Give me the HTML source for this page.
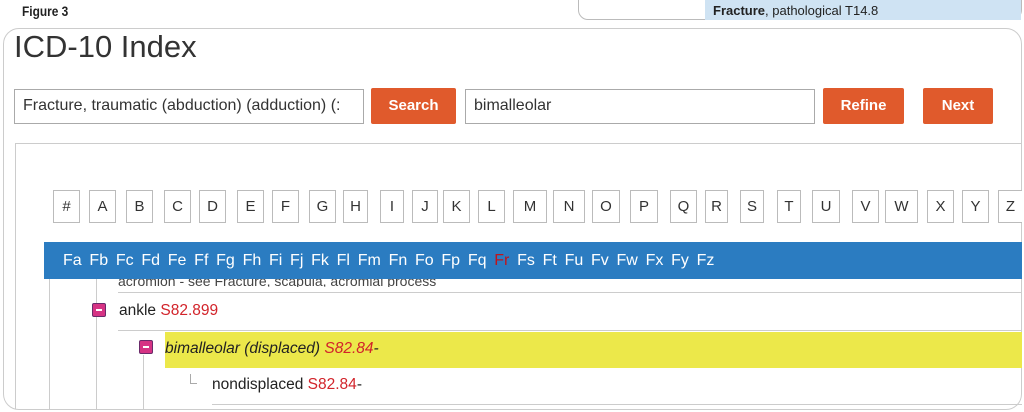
<!DOCTYPE html>
<html><head><meta charset="utf-8"><style>
*{margin:0;padding:0;box-sizing:border-box}
html,body{width:1024px;height:412px;overflow:hidden}
body{background:#fff;position:relative;font-family:"Liberation Sans",sans-serif;color:#222}
.a{position:absolute}
.fig{left:22px;top:3px;font:bold 14px "Liberation Sans Narrow","Liberation Sans",sans-serif;transform:scaleX(.85);transform-origin:left}
.topbox{left:578px;top:-20px;width:444px;height:40px;border:1px solid #bbb;border-radius:10px;overflow:hidden}
.topcell{left:705px;top:0;width:316px;height:20px;background:#cfe3f3;font-size:13px;padding:3px 8px;color:#222}
.panel{left:3px;top:28px;width:1019px;height:382px;border:1.5px solid #ccc;border-radius:16px}
.title{left:14px;top:29px;font-size:31px;color:#333}
.inp{height:35px;border:1px solid #aaa;background:#fff;font-size:16px;padding:7px 8px;white-space:nowrap;overflow:hidden;color:#333}
.btn{height:36px;background:#e05a2c;color:#fff;font-size:15px;font-weight:bold;text-align:center;line-height:36px;border-radius:2px}
.inner{left:15px;top:143px;width:1007px;height:266px;border:1px solid #ccc;border-bottom:none;border-right:none}
.lb{top:190px;width:27px;height:33px;border:1px solid #bbb;text-align:center;line-height:31px;font-size:15px;color:#333;background:#fff}
.bar{left:44px;top:242px;width:978px;height:37px;background:#2b7cc1;color:#fff;font-size:16px;line-height:37px;padding-left:19px;word-spacing:3.3px;white-space:nowrap}
.vl{width:1px;background:#ccc}
.hl{height:1px;background:#ccc}
.ico{width:14px;height:14px;background:#d63384;border:1px solid #6a2a6a;border-radius:2px}
.ico::after{content:"";position:absolute;left:3px;top:5px;width:6px;height:2px;background:#fff}
.red{color:#d2232a}
</style></head><body>
<div class="a fig">Figure 3</div>
<div class="a topbox"></div>
<div class="a topcell"><b>Fracture</b>, pathological T14.8</div>
<div class="a panel"></div>
<div class="a title">ICD-10 Index</div>
<div class="a inp" style="left:14px;top:89px;width:350px">Fracture, traumatic (abduction) (adduction) (:</div>
<div class="a btn" style="left:371px;top:88px;width:85px">Search</div>
<div class="a inp" style="left:465px;top:89px;width:350px">bimalleolar</div>
<div class="a btn" style="left:823px;top:88px;width:81px">Refine</div>
<div class="a btn" style="left:923px;top:88px;width:70px">Next</div>
<div class="a inner"></div>
<div class="a lb" style="left:53px">#</div><div class="a lb" style="left:89px">A</div><div class="a lb" style="left:126px">B</div><div class="a lb" style="left:164px">C</div><div class="a lb" style="left:199px">D</div><div class="a lb" style="left:237px">E</div><div class="a lb" style="left:272px">F</div><div class="a lb" style="left:309px">G</div><div class="a lb" style="left:343px;width:25px">H</div><div class="a lb" style="left:380px;width:24px">I</div><div class="a lb" style="left:412px;width:26px">J</div><div class="a lb" style="left:443px">K</div><div class="a lb" style="left:478px">L</div><div class="a lb" style="left:513px;width:34px">M</div><div class="a lb" style="left:553px;width:32px">N</div><div class="a lb" style="left:592px;width:28px">O</div><div class="a lb" style="left:630px;width:28px">P</div><div class="a lb" style="left:670px">Q</div><div class="a lb" style="left:705px;width:23px">R</div><div class="a lb" style="left:740px;width:24px">S</div><div class="a lb" style="left:777px;width:24px">T</div><div class="a lb" style="left:812px;width:28px">U</div><div class="a lb" style="left:852px">V</div><div class="a lb" style="left:885px;width:33px">W</div><div class="a lb" style="left:927px">X</div><div class="a lb" style="left:962px">Y</div><div class="a lb" style="left:998px;width:24px;border-right:none">Z</div>
<div class="a bar">Fa Fb Fc Fd Fe Ff Fg Fh Fi Fj Fk Fl Fm Fn Fo Fp Fq <span style="color:#c0141b">Fr</span> Fs Ft Fu Fv Fw Fx Fy Fz</div>
<div class="a vl" style="left:49px;top:279px;height:131px"></div>
<div class="a vl" style="left:96px;top:279px;height:131px"></div>
<div class="a vl" style="left:143px;top:355px;height:55px"></div>
<div class="a" style="left:118px;top:279px;height:8px;overflow:hidden;font-size:14px;line-height:4px;color:#444">acromion - see Fracture, scapula, acromial process</div>
<div class="a hl" style="left:118px;top:292px;width:904px"></div>
<div class="a ico" style="left:92px;top:303px"></div>
<div class="a" style="left:119px;top:302px;font-size:15.5px">ankle <span class="red">S82.899</span></div>
<div class="a hl" style="left:118px;top:330px;width:904px"></div>
<div class="a" style="left:165px;top:332px;width:857px;height:36px;background:#ece84a"></div>
<div class="a ico" style="left:139px;top:340px"></div>
<div class="a" style="left:165px;top:340px;font-size:15.5px;font-style:italic">bimalleolar (displaced) <span class="red">S82.84</span>-</div>
<div class="a" style="left:190px;top:374px;width:7px;height:10px;border-left:1px solid #aaa;border-bottom:1px solid #aaa"></div>
<div class="a" style="left:212px;top:376px;font-size:15.5px">nondisplaced <span class="red">S82.84</span>-</div>
<div class="a hl" style="left:212px;top:404px;width:810px"></div>
</body></html>
